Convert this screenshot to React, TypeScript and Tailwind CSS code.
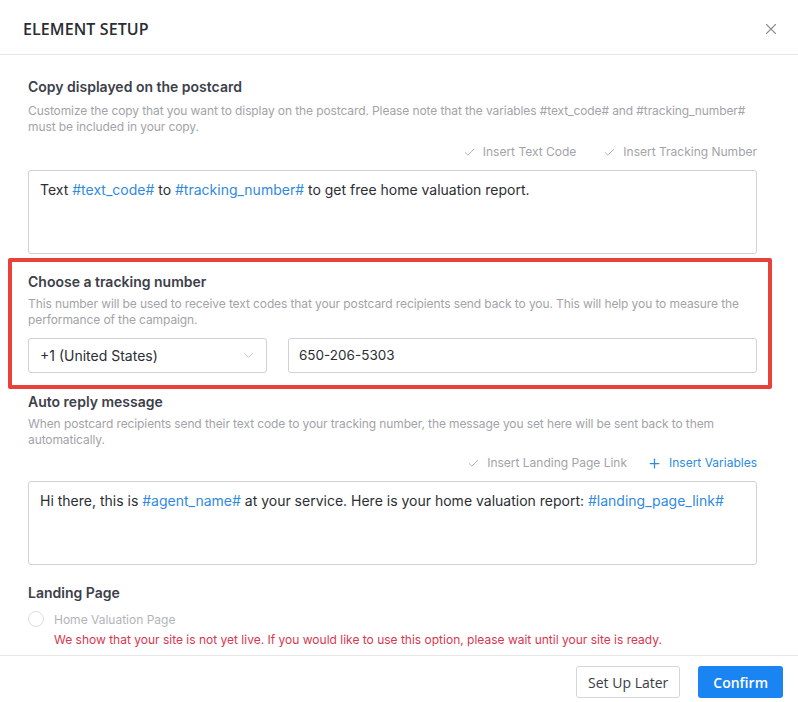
import React from 'react';
import { Check, Plus, X, ChevronDown } from 'lucide-react';

const Var = ({ children }: { children: React.ReactNode }) => (
  <span className="text-[#2f8ae0]">{children}</span>
);

function Section({
  title,
  description,
  descGap = 'mt-[4px]',
  children,
}: {
  title: string;
  description: string;
  descGap?: string;
  children?: React.ReactNode;
}) {
  return (
    <div>
      <h3 className="text-[14px] leading-[20px] font-semibold text-[#3c404a]">{title}</h3>
      <p className={`${descGap} text-[12px] leading-[16px] tracking-[-0.1px] text-[#a3a3a8]`}>{description}</p>
      {children}
    </div>
  );
}

function InsertLink({ label, active }: { label: string; active?: boolean }) {
  const Icon = active ? Plus : Check;
  return (
    <button
      className={`flex items-center gap-[7px] text-[12px] ${active ? 'text-[#2f8ae0]' : 'text-[#a3a3a8]'}`}
    >
      <Icon className={active ? 'w-[15px] h-[15px]' : 'w-[13px] h-[13px]'} strokeWidth={active ? 2 : 1.5} />
      <span>{label}</span>
    </button>
  );
}

function TextBox({ children }: { children: React.ReactNode }) {
  return (
    <div className="h-[84px] rounded-[3px] border border-[#cfd1d6] px-[11px] py-[9px] text-[14px] leading-[20px] text-[#2b2e33]">
      {children}
    </div>
  );
}

export default function App() {
  return (
    <div
      className="w-[798px] h-[702px] bg-white flex flex-col overflow-hidden"
      style={{ fontFamily: 'Inter, "Noto Sans", sans-serif' }}
    >
      <div className="h-[55px] flex items-center justify-between pt-[4px] pl-[23px] pr-[18px] border-b border-[#e6e7ea]">
        <h2
          className="text-[16px] font-semibold text-[#2a2d33] tracking-[0.1px]"
          style={{ fontFamily: '"Open Sans", sans-serif' }}
        >
          ELEMENT SETUP
        </h2>
        <X className="w-[18px] h-[18px] text-[#8c8f96]" strokeWidth={1.5} />
      </div>

      <div className="flex-1 flex flex-col pl-[28px] pr-[41px] pt-[22px]">
        <Section
          title="Copy displayed on the postcard"
          descGap="mt-[6px]"
          description="Customize the copy that you want to display on the postcard. Please note that the variables #text_code# and #tracking_number# must be included in your copy."
        >
          <div className="flex justify-end gap-[27px] mt-[8px] mb-[9px]">
            <InsertLink label="Insert Text Code" />
            <InsertLink label="Insert Tracking Number" />
          </div>
          <TextBox>
            Text <Var>#text_code#</Var> to <Var>#tracking_number#</Var> to get free home valuation report.
          </TextBox>
        </Section>

        <div className="relative mt-[18px]">
          <div className="absolute left-[-20px] right-[-15px] top-[-14px] bottom-[-16px] border-[4px] border-[#e8413a] rounded-[2px] pointer-events-none" />
          <Section
            title="Choose a tracking number"
            description="This number will be used to receive text codes that your postcard recipients send back to you. This will help you to measure the performance of the campaign."
          >
            <div className="flex gap-[21px] mt-[10px]">
              <div className="w-[239px] h-[35px] rounded-[3px] border border-[#cfd1d6] flex items-center justify-between pl-[11px] pr-[10px] text-[14px] text-[#2b2e33]">
                <span>+1 (United States)</span>
                <ChevronDown className="w-[15px] h-[15px] text-[#b5b7bc]" strokeWidth={1.3} />
              </div>
              <div className="flex-1 h-[35px] rounded-[3px] border border-[#cfd1d6] flex items-center px-[10px] text-[13.5px] text-[#2b2e33]">
                650-206-5303
              </div>
            </div>
          </Section>
        </div>

        <div className="mt-[19px]">
          <Section
            title="Auto reply message"
            description="When postcard recipients send their text code to your tracking number, the message you set here will be sent back to them automatically."
          >
            <div className="flex justify-end gap-[20px] mt-[6px] mb-[9px]">
              <InsertLink label="Insert Landing Page Link" />
              <InsertLink label="Insert Variables" active />
            </div>
            <TextBox>
              Hi there, this is <Var>#agent_name#</Var> at your service. Here is your home valuation report:{' '}
              <Var>#landing_page_link#</Var>
            </TextBox>
          </Section>
        </div>

        <div className="mt-[18px]">
          <h3 className="text-[14px] leading-[20px] font-semibold text-[#3c404a]">Landing Page</h3>
          <div className="mt-[7px] flex gap-[10px]">
            <span className="mt-[1px] w-[16px] h-[16px] rounded-full border border-[#dcdde0] bg-white shrink-0" />
            <div className="text-[12px] leading-[20px]">
              <div className="text-[#b3b4b8]">Home Valuation Page</div>
              <div className="text-[#d8364f]">
                We show that your site is not yet live. If you would like to use this option, please wait until your site is ready.
              </div>
            </div>
          </div>
        </div>
      </div>

      <div
        className="h-[47px] border-t border-[#e6e7ea] flex items-start justify-end gap-[18px] pt-[10px] pr-[15px]"
        style={{ fontFamily: '"Open Sans", sans-serif' }}
      >
        <button className="h-[32px] px-[11px] rounded-[3px] border border-[#d3d5d9] text-[14px] text-[#3a3d43] bg-white">
          Set Up Later
        </button>
        <button className="h-[32px] px-[15px] rounded-[3px] bg-[#1a84f2] text-[14px] font-semibold text-white">
          Confirm
        </button>
      </div>
    </div>
  );
}
